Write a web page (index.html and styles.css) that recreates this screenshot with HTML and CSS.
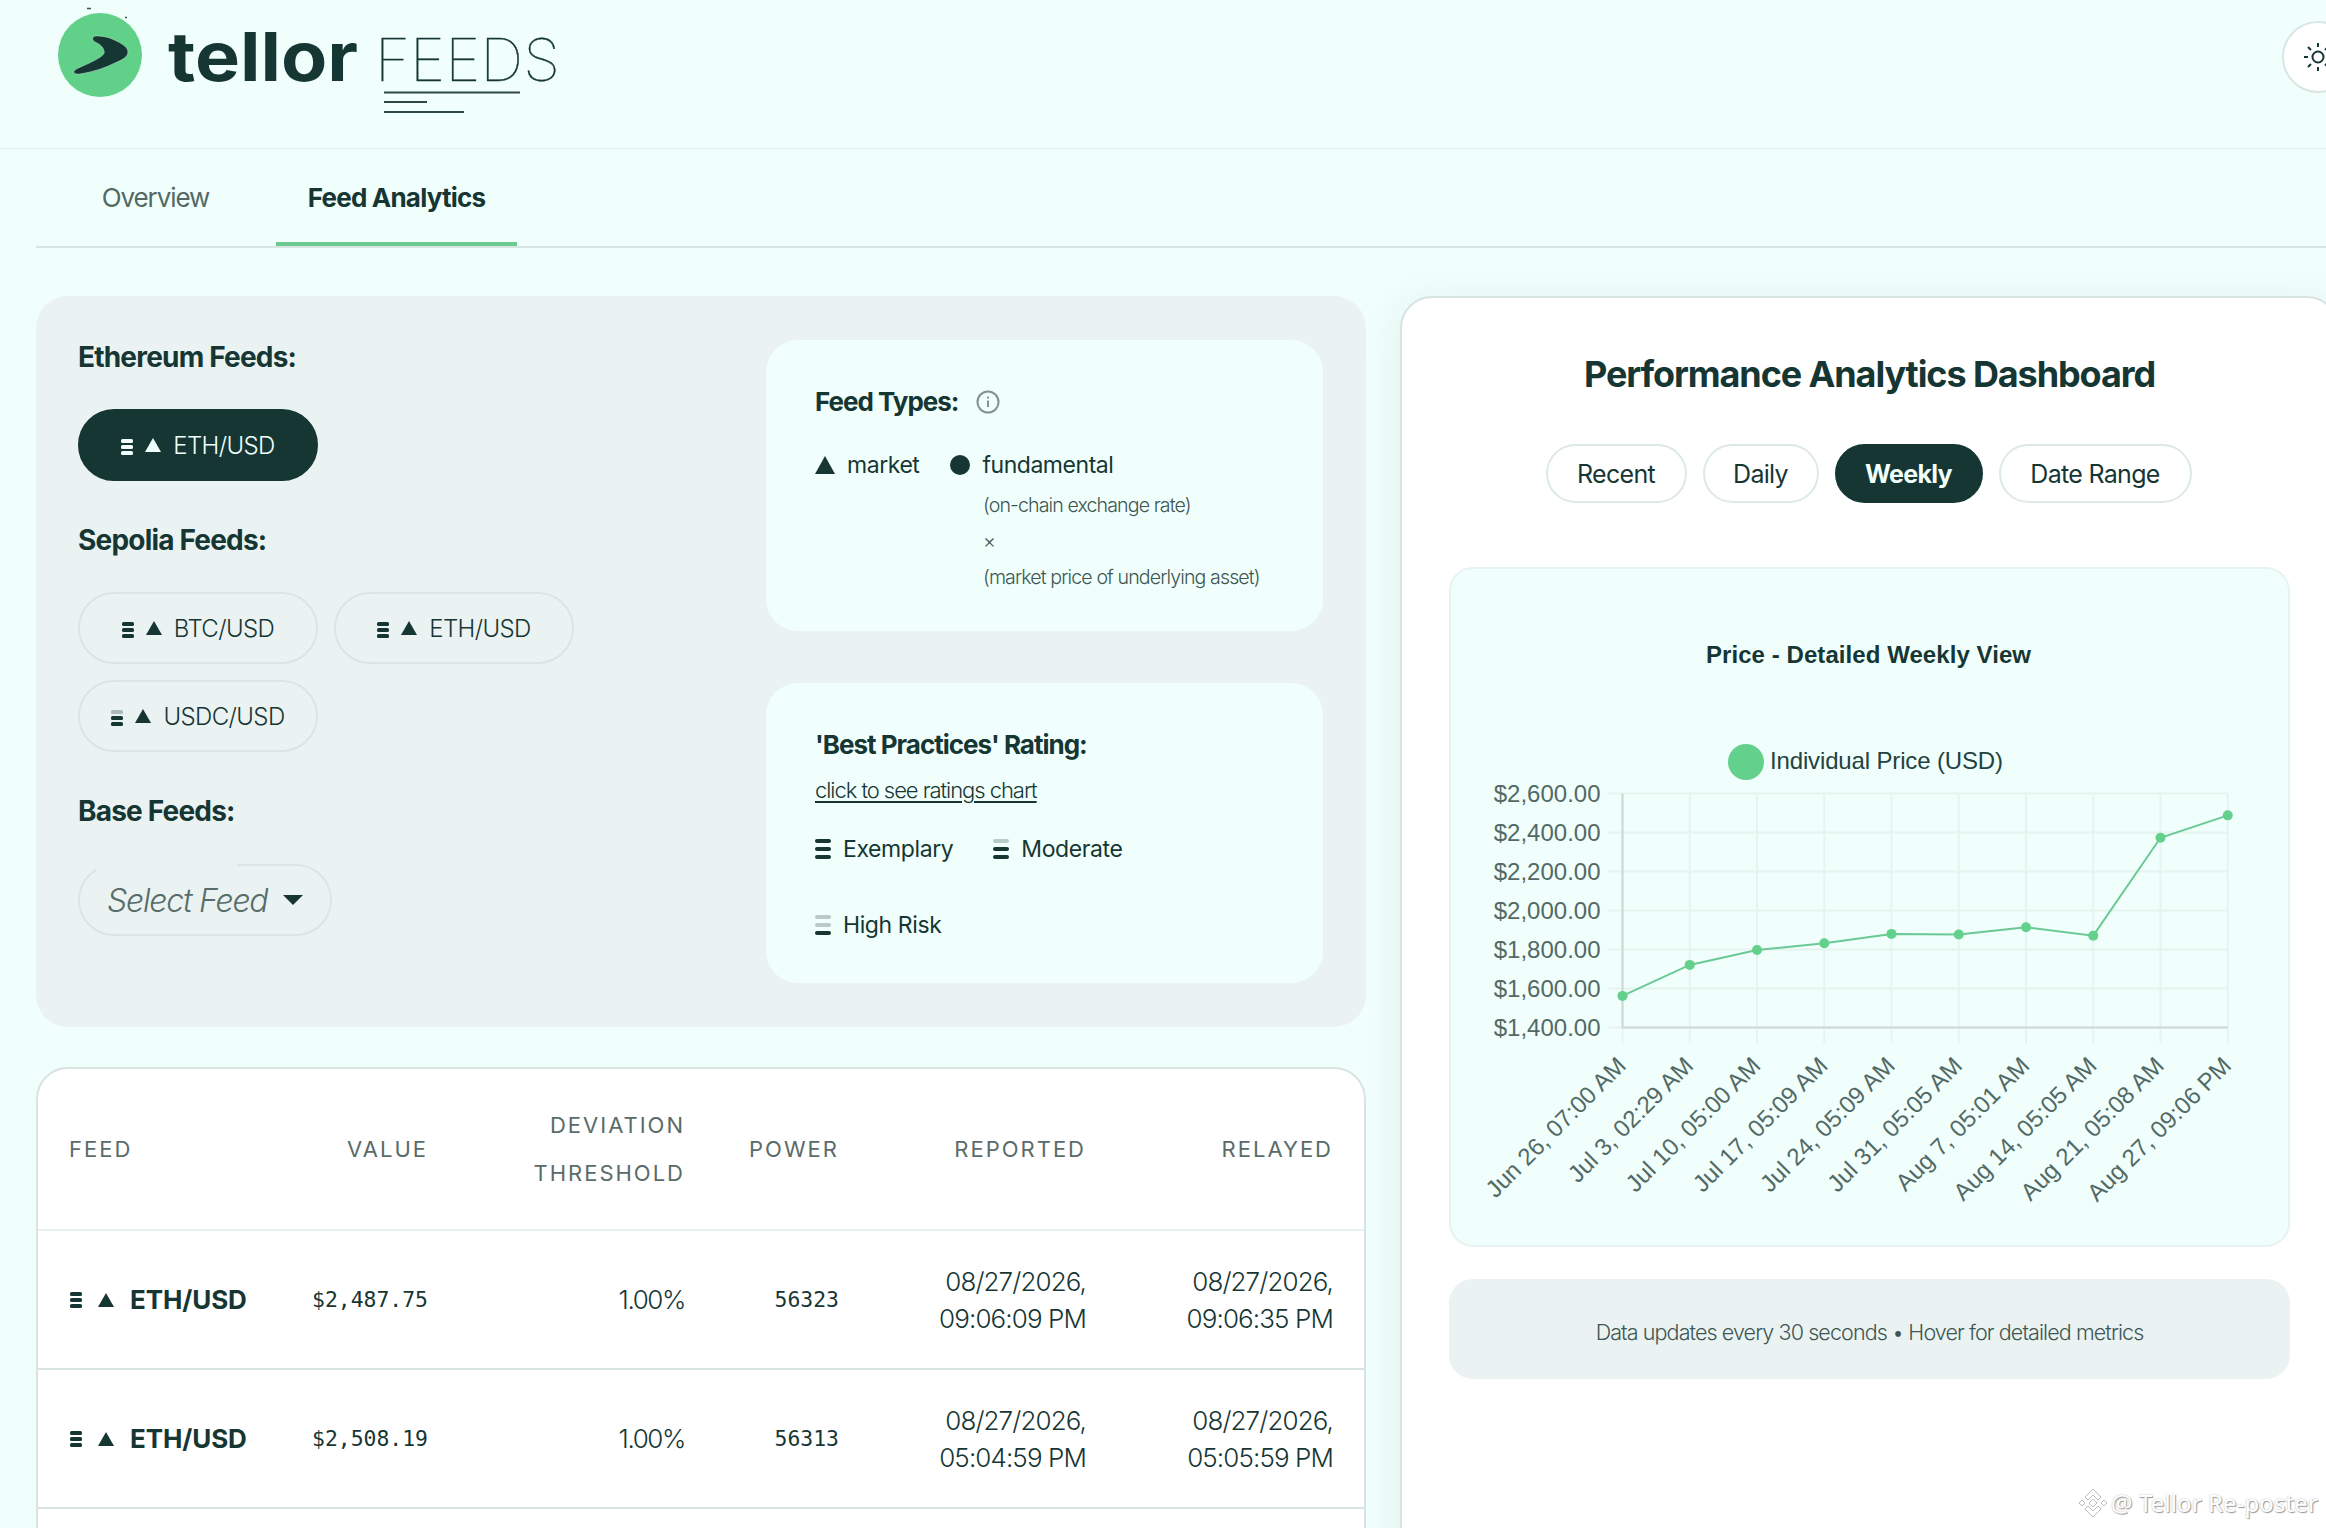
FILE: index.html
```
<!DOCTYPE html>
<html lang="en">
<head>
    <meta charset="UTF-8">
    <meta name="viewport" content="width=device-width, initial-scale=1.0">
    <title>Tellor Feeds</title>
    <link rel="stylesheet" href="styles.css">
</head>
<body>
    <svg class="sprite" aria-hidden="true">
        <symbol id="bars" viewBox="0 0 12 16">
            <rect width="12" height="4" rx="1.5"/>
            <rect y="6" width="12" height="4" rx="1.5"/>
            <rect y="12" width="12" height="4" rx="1.5"/>
        </symbol>
        <symbol id="bars-2" viewBox="0 0 12 16">
            <rect width="12" height="4" rx="1.5" opacity="0.3"/>
            <rect y="6" width="12" height="4" rx="1.5"/>
            <rect y="12" width="12" height="4" rx="1.5"/>
        </symbol>
        <symbol id="triangle" viewBox="0 0 16 14">
            <path d="M8 0L16 14H0Z"/>
        </symbol>
    </svg>

    <header class="header">
        <svg class="logo" width="520" height="120" viewBox="50 0 520 120">
            <circle cx="100" cy="55" r="42" fill="#61d189"/>
            <path d="M93 37C95 35 103 36 110 38C119 42 128 46 128 52C128 57 122 60 115 63C105 68 93 72 80 74C76 74.500 73 73.500 74 71C76 68 89 64 97 59C102 56 105 54 104 51C103 46 99 44 95 42C93 41 92 39 93 37Z" fill="#163634" stroke="#b5dcc9" stroke-width="0.600"/>
            <path d="M87 8.500H91M125 17.500H127" stroke="#3f5553" stroke-width="1.500"/>
            <text class="logo-name" x="168" y="81" textLength="190" lengthAdjust="spacingAndGlyphs">tellor</text>
            <text class="logo-feeds" x="375" y="81" textLength="185" lengthAdjust="spacingAndGlyphs">FEEDS</text>
            <path d="M384 92.500H520M384 102H427M384 112H464" stroke="#2c4745" stroke-width="2"/>
        </svg>
        <button class="theme-toggle" aria-label="Toggle theme">
            <svg width="30" height="30" viewBox="-15 -15 30 30">
                <g fill="none" stroke="#163634" stroke-width="2">
                    <circle r="5.500"/>
                    <path d="M0-14V-10M0 10V14M-14 0H-10M10 0H14M-10-10L-7-7M7 7L10 10M-10 10L-7 7M7-7L10-10"/>
                </g>
            </svg>
        </button>
    </header>

    <nav class="tabs">
        <a class="tab">Overview</a>
        <a class="tab active">Feed Analytics</a>
    </nav>

    <main class="main">
        <div class="left-column">
            <section class="feeds-panel">
                <div class="feeds-list">
                    <h3>Ethereum Feeds:</h3>
                    <div class="feed-buttons">
                        <button class="feed-btn selected"><svg class="bars"><use href="#bars"/></svg><svg class="triangle"><use href="#triangle"/></svg><span>ETH/USD</span></button>
                    </div>
                    <h3>Sepolia Feeds:</h3>
                    <div class="feed-buttons">
                        <button class="feed-btn"><svg class="bars"><use href="#bars"/></svg><svg class="triangle"><use href="#triangle"/></svg><span>BTC/USD</span></button>
                        <button class="feed-btn"><svg class="bars"><use href="#bars"/></svg><svg class="triangle"><use href="#triangle"/></svg><span>ETH/USD</span></button>
                        <button class="feed-btn"><svg class="bars"><use href="#bars-2"/></svg><svg class="triangle"><use href="#triangle"/></svg><span>USDC/USD</span></button>
                    </div>
                    <h3>Base Feeds:</h3>
                    <div class="select-feed">
                        <span>Select Feed</span>
                        <svg width="20" height="10" viewBox="0 0 20 10"><path d="M0 0H20L10 10Z"/></svg>
                    </div>
                </div>

                <div class="legend-column">
                    <div class="legend-card types">
                        <h4>Feed Types:
                            <svg class="info" width="24" height="24" viewBox="0 0 24 24"><circle cx="12" cy="12" r="10.500" fill="none" stroke="#84938f" stroke-width="2"/><path d="M12 10.500V17M12 6.500V8.500" stroke="#84938f" stroke-width="2"/></svg>
                        </h4>
                        <div class="type-row">
                            <div class="type"><svg width="20" height="18" viewBox="0 0 16 14" preserveAspectRatio="none"><path d="M8 0L16 14H0Z"/></svg><span>market</span></div>
                            <div class="type"><i class="dot"></i><span>fundamental</span></div>
                        </div>
                        <div class="type-note">
                            <p>(on-chain exchange rate)</p>
                            <p>×</p>
                            <p>(market price of underlying asset)</p>
                        </div>
                    </div>
                    <div class="legend-card ratings">
                        <h4>'Best Practices' Rating:</h4>
                        <a class="ratings-link">click to see ratings chart</a>
                        <div class="rating-row">
                            <div class="rating"><i class="level"><b></b><b></b><b></b></i>Exemplary</div>
                            <div class="rating"><i class="level"><b class="off"></b><b></b><b></b></i>Moderate</div>
                            <div class="rating"><i class="level"><b class="off"></b><b class="off"></b><b></b></i>High Risk</div>
                        </div>
                    </div>
                </div>
            </section>

            <section class="table-card">
                <table>
                    <colgroup>
                        <col class="col-feed"><col class="col-value"><col class="col-deviation"><col class="col-power"><col class="col-date"><col class="col-date">
                    </colgroup>
                    <thead>
                        <tr>
                            <th>FEED</th>
                            <th>VALUE</th>
                            <th>DEVIATION THRESHOLD</th>
                            <th>POWER</th>
                            <th>REPORTED</th>
                            <th>RELAYED</th>
                        </tr>
                    </thead>
                    <tbody>
                        <tr>
                            <td><div class="feed-name"><svg class="bars"><use href="#bars"/></svg><svg class="triangle"><use href="#triangle"/></svg>ETH/USD</div></td>
                            <td class="mono">$2,487.75</td>
                            <td class="percent">1.00%</td>
                            <td class="mono">56323</td>
                            <td>08/27/2026,<br>09:06:09 PM</td>
                            <td>08/27/2026,<br>09:06:35 PM</td>
                        </tr>
                        <tr>
                            <td><div class="feed-name"><svg class="bars"><use href="#bars"/></svg><svg class="triangle"><use href="#triangle"/></svg>ETH/USD</div></td>
                            <td class="mono">$2,508.19</td>
                            <td class="percent">1.00%</td>
                            <td class="mono">56313</td>
                            <td>08/27/2026,<br>05:04:59 PM</td>
                            <td>08/27/2026,<br>05:05:59 PM</td>
                        </tr>
                    </tbody>
                </table>
            </section>
        </div>

        <section class="dashboard">
            <h2>Performance Analytics Dashboard</h2>
            <div class="range-buttons">
                <button class="range recent">Recent</button>
                <button class="range daily">Daily</button>
                <button class="range weekly">Weekly</button>
                <button class="range dates">Date Range</button>
            </div>
            <div class="chart-box">
                <svg id="priceChart" width="837" height="676" viewBox="0 0 837 676"></svg>
            </div>
            <div class="update-note">Data updates every 30 seconds • Hover for detailed metrics</div>
        </section>
    </main>

    <div class="watermark">
        <svg width="30" height="30" viewBox="-15 -15 30 30">
            <path d="M-8-6L0-14L8-6L5-3L0-8L-5-3ZM-8 6L0 14L8 6L5 3L0 8L-5 3ZM-14 0L-11-3L-8 0L-11 3ZM14 0L11-3L8 0L11 3ZM0-4L4 0L0 4L-4 0Z" fill="#fff" stroke="#bdbdbd" stroke-width="1"/>
        </svg>
        <span>@ Tellor Re-poster</span>
    </div>

    <script src="script.js"></script>
</body>
</html>
```
FILE: styles.css
```
* {
    box-sizing: border-box;
}
body {
    font-family: Inter, "Liberation Sans", sans-serif;
    background-color: #f0fffb;
    color: #163634;
    margin: 0;
    height: 1528px;
    overflow: hidden;
}
h2, h3, h4, p {
    margin: 0;
}
button {
    font-family: inherit;
    color: inherit;
    padding: 0;
}
.sprite {
    display: none;
}
.bars {
    width: 12px;
    height: 16px;
    fill: currentColor;
}
.triangle {
    width: 16px;
    height: 14px;
    fill: currentColor;
}

/* header */
.header {
    display: flex;
    justify-content: space-between;
    width: 2354px;
    height: 149px;
    padding-left: 50px;
    border-bottom: 1px solid #e0efec;
}
.logo-name {
    font-size: 68px;
    font-weight: 700;
    fill: #163634;
}
.logo-feeds {
    font-size: 59px;
    font-weight: 100;
    fill: #163634;
    stroke: #163634;
    stroke-width: 0.4px;
}
.theme-toggle {
    display: flex;
    align-items: center;
    justify-content: center;
    width: 72px;
    height: 72px;
    margin-top: 21px;
    border: 2px solid #d9e6e3;
    border-radius: 50%;
    background-color: #fff;
}

/* tabs */
.tabs {
    display: flex;
    gap: 35px;
    height: 99px;
    margin-left: 36px;
    padding-left: 34px;
    border-bottom: 2px solid #d6e5e2;
    font-size: 26px;
}
.tab {
    width: 171px;
    text-align: center;
    line-height: 98px;
    color: #536966;
    letter-spacing: -1.1px;
}
.tab.active {
    width: 241px;
    border-bottom: 4px solid #6cc992;
    font-weight: 700;
    color: #163634;
    letter-spacing: -0.8px;
}

/* layout */
.main {
    display: grid;
    grid-template-columns: 1330px 939px;
    gap: 34px;
    padding: 48px 0 0 36px;
    width: 2375px;
    height: 1280px;
    overflow: hidden;
}
.feeds-panel {
    display: flex;
    justify-content: space-between;
    height: 731px;
    padding: 43px 43px 0 42px;
    border-radius: 32px;
    background-color: #eaf3f2;
}
.feeds-list {
    width: 600px;
}
.feeds-list h3 {
    margin-bottom: 34px;
    font-size: 28px;
    font-weight: 700;
    line-height: 36px;
    letter-spacing: -0.8px;
}
.feed-buttons {
    display: flex;
    flex-wrap: wrap;
    gap: 16px;
    margin-bottom: 41px;
}
.feed-btn {
    display: flex;
    align-items: center;
    justify-content: center;
    gap: 12px;
    width: 240px;
    height: 72px;
    border: 2px solid #dae6e4;
    border-radius: 36px;
    background-color: transparent;
    font-size: 24px;
    font-weight: 300;
    letter-spacing: -0.6px;
}
.feed-btn .bars {
    margin-top: 3px;
}
.feed-btn.selected {
    border-color: #163634;
    background-color: #163634;
    color: #f0fffb;
}
.select-feed {
    position: relative;
    display: flex;
    align-items: center;
    gap: 16px;
    width: 254px;
    height: 72px;
    margin-top: 35px;
    padding-left: 27px;
    border: 2px solid #dae6e4;
    border-radius: 36px;
    font-size: 32px;
    font-style: italic;
    font-weight: 300;
    letter-spacing: -1.2px;
    color: #586d6a;
}
/* empty floating label covering the outline */
.select-feed::before {
    content: "";
    position: absolute;
    left: 16px;
    top: -2px;
    width: 141px;
    height: 9px;
    background-color: #eaf3f2;
}
.select-feed svg {
    fill: #163634;
}

/* legend cards */
.legend-column {
    width: 557px;
    padding-top: 1px;
}
.legend-card {
    padding: 44px 49px 0;
    border-radius: 32px;
    background-color: #f0fffb;
}
.legend-card h4 {
    display: flex;
    align-items: center;
    gap: 17px;
    font-size: 26px;
    font-weight: 700;
    line-height: 36px;
    letter-spacing: -1px;
}
.types {
    height: 291px;
    margin-bottom: 52px;
}
.type-row {
    display: flex;
    gap: 31px;
    margin-top: 27px;
    font-size: 23px;
    line-height: 36px;
    letter-spacing: -0.45px;
}
.type {
    display: flex;
    align-items: center;
    gap: 12px;
}
.type svg {
    fill: #163634;
}
.dot {
    width: 20px;
    height: 20px;
    border-radius: 50%;
    background-color: #163634;
}
.type-note {
    margin: 4px 0 0 168px;
    font-size: 19.6px;
    font-weight: 300;
    line-height: 36px;
    letter-spacing: -0.9px;
    white-space: nowrap;
    color: #3f5654;
}
.ratings {
    height: 300px;
}
.ratings-link {
    display: block;
    margin-top: 13px;
    font-size: 22px;
    font-weight: 300;
    line-height: 28px;
    letter-spacing: -1.05px;
    text-decoration: underline;
    text-underline-offset: 3px;
    text-decoration-thickness: 2px;
}
.rating-row {
    display: flex;
    flex-wrap: wrap;
    gap: 40px;
    max-width: 400px;
    margin-top: 27px;
    font-size: 23px;
    line-height: 36px;
    letter-spacing: -0.4px;
}
.rating {
    display: flex;
    align-items: center;
    gap: 12px;
}
.level {
    display: flex;
    flex-direction: column;
    gap: 4px;
}
.level b {
    width: 16px;
    height: 4px;
    border-radius: 2px;
    background-color: #163634;
}
.level .off {
    background-color: #b9cbc8;
}

/* reports table */
.table-card {
    height: 520px;
    margin-top: 40px;
    border: 2px solid #d9e3e2;
    border-radius: 32px;
    background-color: #fff;
}
table {
    width: 1326px;
    table-layout: fixed;
    border-spacing: 0;
}
.col-feed {
    width: 241px;
}
.col-value {
    width: 180px;
}
.col-deviation {
    width: 257px;
}
.col-power {
    width: 154px;
}
.col-date {
    width: 247px;
}
th {
    height: 162px;
    padding: 0 31px;
    border-bottom: 2px solid #e8f1ef;
    font-size: 22px;
    font-weight: 400;
    line-height: 48px;
    letter-spacing: 2px;
    text-align: right;
    color: #5a6b69;
}
th:first-child {
    text-align: left;
}
td {
    height: 139px;
    padding: 0 31px;
    border-bottom: 2px solid #d9e3e2;
    font-size: 26px;
    font-weight: 300;
    line-height: 37px;
    letter-spacing: -0.9px;
    text-align: right;
    white-space: nowrap;
}
.percent {
    letter-spacing: -1.4px;
}
.feed-name {
    display: flex;
    align-items: center;
    gap: 16px;
    margin-left: 1px;
    font-weight: 700;
    letter-spacing: -0.1px;
}
.mono {
    font-family: "DejaVu Sans Mono", monospace;
    font-size: 21.4px;
    letter-spacing: 0;
}

/* analytics dashboard */
.dashboard {
    height: 1300px;
    padding: 52px 47px 0;
    border: 2px solid #d9e3e2;
    border-radius: 32px;
    background-color: #fff;
    box-shadow: 0 8px 40px rgba(22, 54, 52, 0.08);
}
.dashboard h2 {
    font-size: 36px;
    font-weight: 700;
    line-height: 48px;
    letter-spacing: -1.1px;
    text-align: center;
}
.range-buttons {
    display: flex;
    justify-content: center;
    gap: 16px;
    margin: 46px 2px 64px 0;
}
.range {
    height: 59px;
    border: 2px solid #dce9e6;
    border-radius: 30px;
    background-color: #fff;
    font-size: 25px;
    letter-spacing: -0.7px;
}
.recent {
    width: 141px;
}
.daily {
    width: 116px;
}
.weekly {
    width: 148px;
    border-color: #163634;
    background-color: #163634;
    color: #f0fffb;
    font-weight: 700;
}
.dates {
    width: 193px;
}
.chart-box {
    height: 680px;
    border: 2px solid #e7f3f0;
    border-radius: 24px;
    background-color: #f0fffb;
}
.chart-box svg {
    display: block;
    font-family: "Liberation Sans", Arial, sans-serif;
    font-size: 24px;
    fill: #536966;
}
.chart-title {
    font-weight: 700;
    fill: #163634;
}
.legend-text {
    fill: #234240;
}
.grid-line {
    stroke: #e6f4f0;
    stroke-width: 2;
}
.axis-line {
    stroke: #cbd8d5;
    stroke-width: 2;
}
.price-line {
    fill: none;
    stroke: #6bc995;
    stroke-width: 2;
}
.price-dot {
    fill: #63d08b;
}
.update-note {
    height: 100px;
    margin-top: 32px;
    border-radius: 24px;
    background-color: #eaf3f2;
    font-size: 21.5px;
    font-weight: 300;
    line-height: 106px;
    letter-spacing: -0.9px;
    text-align: center;
    color: #3f5654;
}

.watermark {
    position: absolute;
    right: 8px;
    bottom: 9px;
    display: flex;
    align-items: center;
    gap: 3px;
    font-family: "Noto Sans", sans-serif;
    font-size: 24px;
    letter-spacing: 0.1px;
    color: #fff;
    text-shadow: 1px 1px 1px #999, 0 0 2px #bbb;
}
```
FILE: script.js
```
const prices = [
    ['Jun 26, 07:00 AM', 1562],
    ['Jul 3, 02:29 AM', 1721],
    ['Jul 10, 05:00 AM', 1797],
    ['Jul 17, 05:09 AM', 1832],
    ['Jul 24, 05:09 AM', 1880],
    ['Jul 31, 05:05 AM', 1877],
    ['Aug 7, 05:01 AM', 1914],
    ['Aug 14, 05:05 AM', 1871],
    ['Aug 21, 05:08 AM', 2373],
    ['Aug 27, 09:06 PM', 2488]
];

const chartLeft = 171.5;
const chartTop = 224.5;
const chartBottom = 458.5;
const stepX = 67.25;
const chartRight = chartLeft + stepX * 9;

let out = `<text class="chart-title" x="417.5" y="94" text-anchor="middle" textLength="325">Price - Detailed Weekly View</text>
    <circle class="price-dot" cx="295" cy="193" r="18"/>
    <text class="legend-text" x="319" y="200" textLength="233">Individual Price (USD)</text>`;

// horizontal grid and price labels
for (let i = 0; i <= 6; i++) {
    const y = chartTop + i * 39;
    const label = '$' + (2600 - i * 200).toLocaleString('en-US') + '.00';
    out += `<line class="grid-line" x1="${chartLeft - 14}" x2="${chartRight}" y1="${y}" y2="${y}"/>
        <text x="149.5" y="${y + 8}" text-anchor="end">${label}</text>`;
}

// vertical grid and date labels
prices.forEach(([date], i) => {
    const x = chartLeft + i * stepX;
    out += `<line class="grid-line" x1="${x}" x2="${x}" y1="${chartTop}" y2="${chartBottom + 16}"/>
        <text transform="translate(${x + 5} 498) rotate(-45)" text-anchor="end">${date}</text>`;
});

out += `<path class="axis-line" fill="none" d="M${chartLeft} ${chartTop}V${chartBottom}H${chartRight}"/>`;

const points = prices.map(([, price], i) => [chartLeft + i * stepX, chartBottom - (price - 1400) / 200 * 39]);
out += `<polyline class="price-line" points="${points.join(' ')}"/>`;
points.forEach(([x, y]) => {
    out += `<circle class="price-dot" cx="${x}" cy="${y}" r="5"/>`;
});

document.getElementById('priceChart').innerHTML = out;
```
